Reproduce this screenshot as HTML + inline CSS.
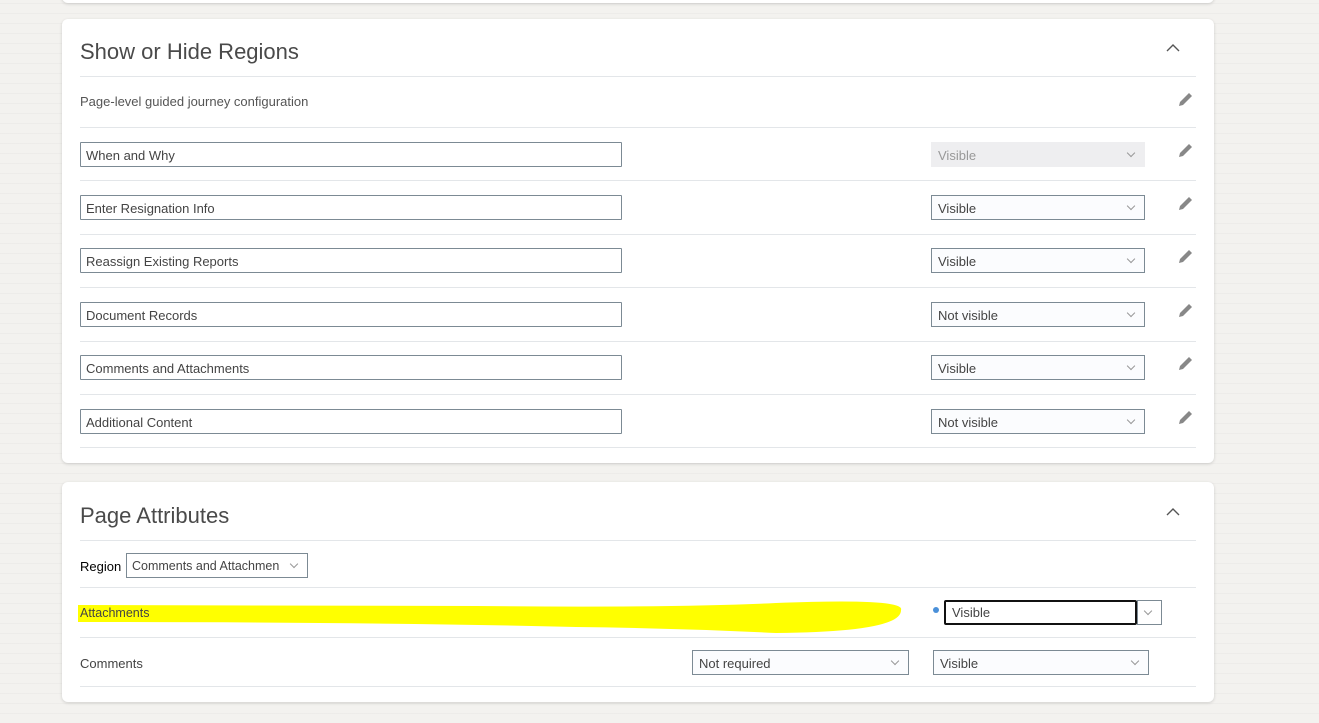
<!DOCTYPE html>
<html><head><style>
body{margin:0;width:1319px;height:723px;background:#f3f2ef;font-family:"Liberation Sans",sans-serif;position:relative;overflow:hidden;
background-image:repeating-linear-gradient(0deg,transparent 0 9px,rgba(0,0,0,0.025) 9px 10px);}
.card{position:absolute;background:#fff;border-radius:6px;box-shadow:0 1px 3px rgba(0,0,0,.15);}
.a{position:absolute}
.h{font-size:22px;font-weight:300;color:#4a4a4a;}
.sep{position:absolute;left:80px;width:1116px;height:1px;background:#e3e6e9}
.t{position:absolute;font-size:13px;color:#444}
.inp{position:absolute;left:80px;border:1px solid #7c8a94;border-radius:1px;font-size:13px;color:#444;line-height:25px;padding-left:5px;box-sizing:border-box;width:542px;height:25px}
.sel{position:absolute;height:25px;box-sizing:border-box;border:1px solid #7c8a94;background:#fbfcfe;font-size:13px;color:#444;line-height:25px;padding-left:6px}
.sel:after{content:"";position:absolute;right:10px;top:7px;width:5px;height:5px;border-right:1px solid #999;border-bottom:1px solid #999;transform:rotate(45deg)}
.pen{position:absolute;left:1177px;width:18px;height:18px}
.chev{position:absolute;left:1166px;width:14px;height:14px}
</style></head><body>
<div class="card" style="left:62px;top:-10px;width:1152px;height:13px"></div>
<div class="card" style="left:62px;top:19px;width:1152px;height:444px"></div>
<div class="card" style="left:62px;top:482px;width:1152px;height:220px"></div>

<div class="a h" style="left:80px;top:39px">Show or Hide Regions</div>
<svg class="chev" style="top:41px" viewBox="0 0 14 14"><path d="M1 10 L7 4 L13 10" fill="none" stroke="#555" stroke-width="1.4"/></svg>
<div class="sep" style="top:76px"></div>
<div class="t" style="left:80px;top:94px;color:#555">Page-level guided journey configuration</div>
<div class="sep" style="top:127px"></div>

<div class="inp" style="top:142px">When and Why</div>
<div class="sel" style="left:931px;top:142px;width:214px;background:#eeeef0;border-color:#eeeef0;color:#999">Visible</div>
<div class="sep" style="top:180px"></div>
<div class="inp" style="top:195px">Enter Resignation Info</div>
<div class="sel" style="left:931px;top:195px;width:214px">Visible</div>
<div class="sep" style="top:234px"></div>
<div class="inp" style="top:248px">Reassign Existing Reports</div>
<div class="sel" style="left:931px;top:248px;width:214px">Visible</div>
<div class="sep" style="top:287px"></div>
<div class="inp" style="top:302px">Document Records</div>
<div class="sel" style="left:931px;top:302px;width:214px">Not visible</div>
<div class="sep" style="top:341px"></div>
<div class="inp" style="top:355px">Comments and Attachments</div>
<div class="sel" style="left:931px;top:355px;width:214px">Visible</div>
<div class="sep" style="top:394px"></div>
<div class="inp" style="top:409px">Additional Content</div>
<div class="sel" style="left:931px;top:409px;width:214px">Not visible</div>
<div class="sep" style="top:447px"></div>

<svg class="pen" style="top:90px" viewBox="0 0 18 18"><path d="M2 16 L3 12 L12 3 L15 6 L6 15 Z" fill="#888"/></svg>
<svg class="pen" style="top:141px" viewBox="0 0 18 18"><path d="M2 16 L3 12 L12 3 L15 6 L6 15 Z" fill="#888"/></svg>
<svg class="pen" style="top:194px" viewBox="0 0 18 18"><path d="M2 16 L3 12 L12 3 L15 6 L6 15 Z" fill="#888"/></svg>
<svg class="pen" style="top:247px" viewBox="0 0 18 18"><path d="M2 16 L3 12 L12 3 L15 6 L6 15 Z" fill="#888"/></svg>
<svg class="pen" style="top:301px" viewBox="0 0 18 18"><path d="M2 16 L3 12 L12 3 L15 6 L6 15 Z" fill="#888"/></svg>
<svg class="pen" style="top:354px" viewBox="0 0 18 18"><path d="M2 16 L3 12 L12 3 L15 6 L6 15 Z" fill="#888"/></svg>
<svg class="pen" style="top:408px" viewBox="0 0 18 18"><path d="M2 16 L3 12 L12 3 L15 6 L6 15 Z" fill="#888"/></svg>

<div class="a h" style="left:80px;top:503px">Page Attributes</div>
<svg class="chev" style="top:505px" viewBox="0 0 14 14"><path d="M1 10 L7 4 L13 10" fill="none" stroke="#555" stroke-width="1.4"/></svg>
<div class="sep" style="top:540px"></div>
<div class="t" style="left:80px;top:559px;color:#000">Region</div>
<div class="sel" style="left:126px;top:553px;width:182px;font-size:12.5px;padding-left:5px;padding-right:24px;white-space:nowrap;overflow:hidden;background:#fff">Comments and Attachmen</div>
<div class="sep" style="top:587px"></div>
<svg class="a" style="left:76px;top:600px" width="826" height="36"><path d="M2 5 L400 6 Q600 8 700 3 Q830 -2 825 10 Q826 32 700 33 Q600 28 500 27 Q300 22 2 22 Z" fill="#ffff00"/></svg>
<div class="t" style="left:80px;top:606px;font-size:12.5px">Attachments</div>
<div class="a" style="left:933px;top:607px;width:6px;height:6px;border-radius:50%;background:#4a90d9"></div>
<div class="a" style="left:944px;top:600px;width:193px;height:25px;box-sizing:border-box;border:2px solid #111;border-radius:2px;font-size:13px;line-height:22px;padding-left:6px;color:#444">Visible</div>
<div class="sel" style="left:1137px;top:600px;width:25px;background:#fff"></div>
<div class="sep" style="top:637px"></div>
<div class="t" style="left:80px;top:656px">Comments</div>
<div class="sel" style="left:692px;top:650px;width:217px">Not required</div>
<div class="sel" style="left:933px;top:650px;width:216px">Visible</div>
<div class="sep" style="top:686px"></div>
</body></html>
